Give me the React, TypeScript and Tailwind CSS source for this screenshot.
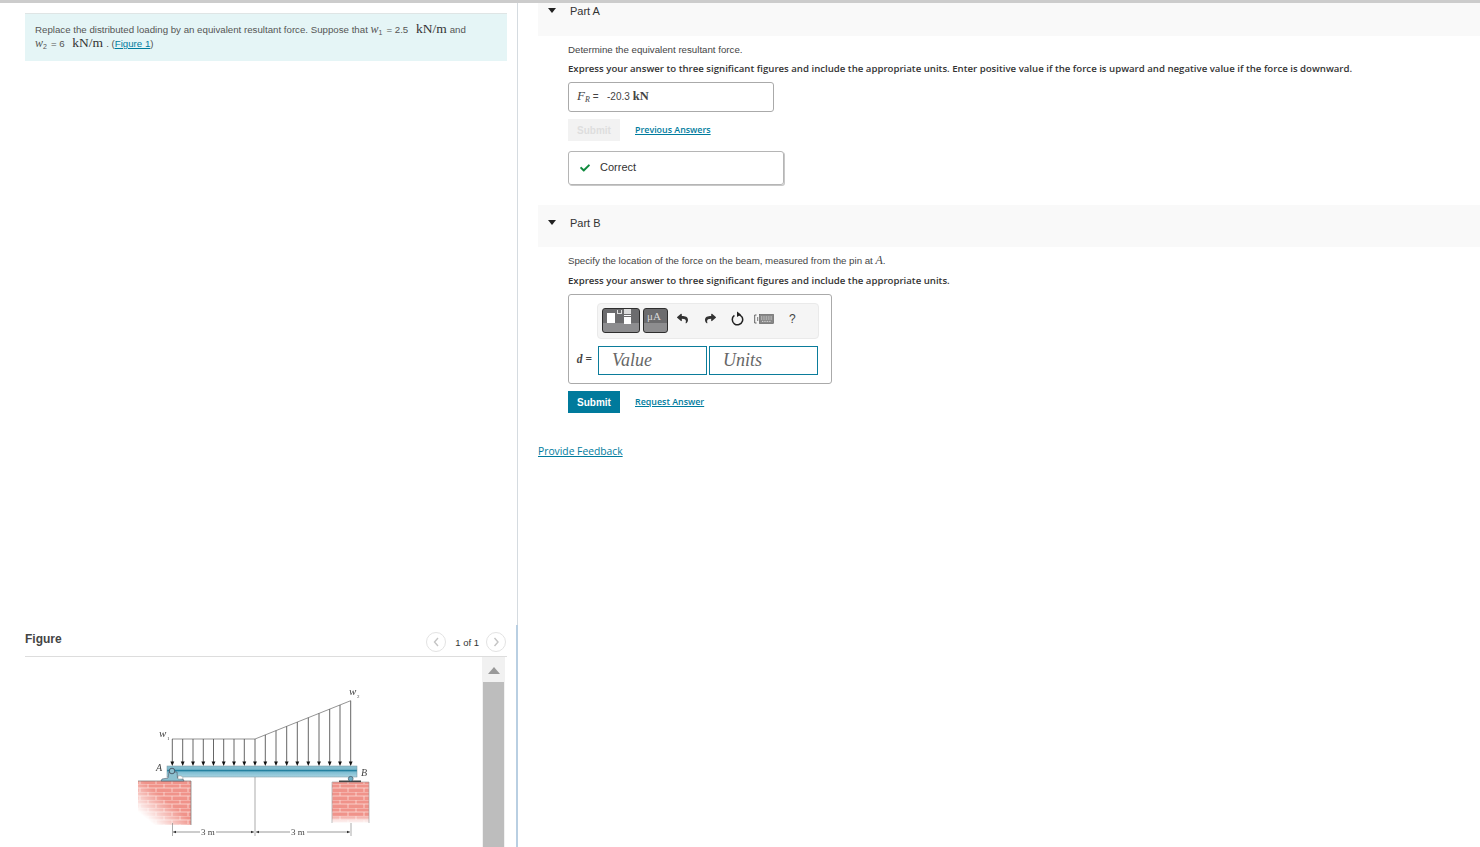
import { FaCheck, FaReply, FaShare } from "react-icons/fa";

const serif = "font-['Liberation_Serif',serif]";
const link = "text-[#007c9e] underline";

const Unit = ({ children }: { children: string }) => (
    <span className={`${serif} text-[13.5px] text-[#333] ml-[5px] mr-[3px]`}>{children}</span>
);

const W = ({ n }: { n: string }) => (
    <>
        <i className={`${serif} text-[12px]`}>w</i>
        <sub className="text-[7px] mr-[4px]">{n}</sub>
    </>
);

const Beam = () => {
    const flat = [172.3, 182.7, 193, 203.3, 213.5, 223.7, 234, 244.3, 255];
    const slope = [265.3, 276, 286.7, 297.3, 308.3, 319, 329.7, 340, 350.7];
    const top = (x: number) => 739 - ((x - 255) / 95.7) * 38.3;
    return (
        <svg className="blur-[0.3px]" width="457" height="190" viewBox="25 657 457 190">
            <defs>
                <pattern id="brick" width="16" height="8" patternUnits="userSpaceOnUse">
                    <rect width="16" height="8" fill="#f0938a" />
                    <path d="M0 0H16M0 4H16M4 0V4M12 4V8" stroke="#fbdcd7" strokeWidth="0.8" />
                </pattern>
                <linearGradient id="fadeL" x1="1" y1="0" x2="0" y2="1">
                    <stop offset="0.45" stopColor="#fff" stopOpacity="0" />
                    <stop offset="0.85" stopColor="#fff" stopOpacity="1" />
                </linearGradient>
                <linearGradient id="fadeB" x1="0" y1="0" x2="0" y2="1">
                    <stop offset="0.8" stopColor="#fff" stopOpacity="0" />
                    <stop offset="1" stopColor="#fff" stopOpacity="1" />
                </linearGradient>
                <linearGradient id="beam" x1="0" y1="0" x2="0" y2="1">
                    <stop offset="0" stopColor="#8cc2d2" />
                    <stop offset="0.3" stopColor="#7db8cb" />
                    <stop offset="0.4" stopColor="#1f7d9c" />
                    <stop offset="0.55" stopColor="#7dbdd2" />
                    <stop offset="1" stopColor="#a9d4e2" />
                </linearGradient>
            </defs>
            <rect x="138" y="781" width="53" height="44" fill="url(#brick)" />
            <rect x="138" y="781" width="53" height="44" fill="url(#fadeL)" />
            <path d="M138 781H191V825" fill="none" stroke="#777" strokeWidth="0.7" />
            <rect x="332" y="782" width="37" height="41" fill="url(#brick)" />
            <rect x="332" y="782" width="37" height="41" fill="url(#fadeB)" />
            <path d="M332 823V782H369V823" fill="none" stroke="#999" strokeWidth="0.6" />
            <path d="M172 739H255L350.7 700.7" fill="none" stroke="#666" strokeWidth="0.7" />
            {[...flat, ...slope].map((x) => {
                const y = x <= 255 ? 739 : top(x);
                return (
                    <g key={x}>
                        <line x1={x} y1={y} x2={x} y2={763} stroke="#555" strokeWidth="0.9" />
                        <path d={`M${x - 1.9} 761.5L${x + 1.9} 761.5L${x} 766Z`} fill="#111" />
                    </g>
                );
            })}
            <rect x="167" y="766" width="190" height="11" fill="url(#beam)" stroke="#74909b" strokeWidth="0.5" />
            <path d="M169 772H177L177.5 778L183 779L184 781H161L162 779L168 778Z" fill="#8cc0cf" stroke="#445" strokeWidth="0.5" />
            <circle cx="172" cy="771" r="2.8" fill="#8cc0cf" stroke="#334" strokeWidth="0.7" />
            <path d="M178 776Q183 775 183 779L178 779Z" fill="#fff" stroke="#777" strokeWidth="0.4" />
            <rect x="339" y="780.5" width="22" height="1.6" fill="#444" />
            <circle cx="350.7" cy="778.8" r="2.4" fill="#6fb0c6" stroke="#345" strokeWidth="0.6" />
            <line x1="255" y1="777" x2="255" y2="836" stroke="#888" strokeWidth="0.7" />
            <line x1="172.5" y1="823" x2="172.5" y2="836" stroke="#888" strokeWidth="0.7" />
            <line x1="351" y1="823" x2="351" y2="836" stroke="#888" strokeWidth="0.7" />
            <path d="M173 832H200M216 832H254M256 832H290M307 832H350" stroke="#555" strokeWidth="0.6" />
            <path d="M173 832L176 830.8V833.2ZM254 832L251 830.8V833.2ZM256 832L259 830.8V833.2ZM350 832L347 830.8V833.2Z" fill="#333" />
            <g fontFamily="'Liberation Serif',serif" fill="#444">
                <text x="201" y="835" fontSize="9">3 m</text>
                <text x="291" y="835" fontSize="9">3 m</text>
                <g fontStyle="italic" fontSize="10">
                    <text x="156" y="771">A</text>
                    <text x="361" y="776">B</text>
                    <text x="159" y="737" fontSize="11">w</text>
                    <text x="349" y="695" fontSize="11">w</text>
                </g>
                <text x="167" y="740" fontSize="5">1</text>
                <text x="357" y="698" fontSize="5">2</text>
            </g>
        </svg>
    );
};

const Chevron = ({ d }: { d: string }) => (
    <svg width="7" height="10" viewBox="0 0 7 10">
        <path d={d} fill="none" stroke="#c4c4c4" strokeWidth="1.4" />
    </svg>
);

const LeftPanel = () => (
    <div className="flex flex-col w-[518px] shrink-0 h-[844px] pl-[25px] pr-[10px] relative border-r border-[#d5dbe0]">
        <div className="mt-[10px] h-[48px] w-[482px] bg-[#e5f5f6] border-t border-[#dfe5e5] pt-[8px] pl-[10px] text-[9.7px] leading-[13px] text-[#555]">
            <p>
                Replace the distributed loading by an equivalent resultant force. Suppose that <W n="1" />= 2.5 <Unit>kN/m</Unit>and
            </p>
            <p>
                <W n="2" />= 6 <Unit>kN/m</Unit>. <span>(<a className={link}>Figure 1</a>)</span>
            </p>
        </div>
        <div className="mt-auto">
            <div className="flex items-center h-[34px] border-b border-[#dddddd] w-[482px]">
                <span className="text-[12px] font-bold text-[#444] flex-1 -translate-y-[1px]">Figure</span>
                <div className="flex items-center translate-y-[2px]">
                    <span className="w-[20px] h-[20px] rounded-full border border-[#e3e3e3] flex items-center justify-center">
                        <Chevron d="M5 1L1.5 5L5 9" />
                    </span>
                    <span className="mx-[8px] text-[9.5px] text-[#333] translate-x-[1px] translate-y-[2px]">1 of 1</span>
                    <span className="w-[20px] h-[20px] rounded-full border border-[#e3e3e3] flex items-center justify-center mr-[1px]">
                        <Chevron d="M1.5 1L5 5L1.5 9" />
                    </span>
                </div>
            </div>
            <div className="flex w-[457px] h-[190px] overflow-hidden">
                <Beam />
            </div>
        </div>
        <div className="absolute left-[482px] bottom-0 w-[23px] h-[190px] bg-[#f1f1f1] px-[1px]">
            <div className="mx-auto mt-[10px] w-0 h-0 border-x-[6px] border-x-transparent border-b-[7px] border-b-[#999]" />
            <div className="mt-[8px] h-[165px] bg-[#bdbdbd]" />
        </div>
        <div className="absolute right-[-1px] bottom-0 w-[2px] h-[222px] bg-[#b9cfe2]" />
    </div>
);

const PartHeader = ({ title, className }: { title: string; className: string }) => (
    <div className={`flex pl-[10px] bg-[#f9f9f9] ${className}`}>
        <span className="mr-[14px] mt-[3px] w-0 h-0 border-x-[4px] border-x-transparent border-t-[5px] border-t-[#222]" />
        <span className="text-[11px] leading-[13px] text-[#333]">{title}</span>
    </div>
);

const ToolBtn = ({ width, children }: { width: string; children: React.ReactNode }) => (
    <div
        className={`${width} h-[25px] rounded-[3px] border border-[#2e2e2e] relative overflow-hidden bg-[linear-gradient(#6c6c6e_0,#6c6c6e_60%,#8d8d8f_60%,#8d8d8f_100%)]`}
    >
        {children}
    </div>
);

const Toolbar = () => (
    <div className="flex items-start w-[222px] h-[36px] ml-[28px] bg-[#f5f5f5] border border-[#eaeaea] rounded-[4px] pl-[4px] pt-[4px]">
        <ToolBtn width="w-[38px]">
            <div className="absolute left-[4px] top-[4px] w-[8px] h-[10px] bg-white" />
            <div className="absolute left-[14px] top-[1px] w-[5px] h-[4px] border border-t-0 border-[#ddd]" />
            <div className="absolute left-[21px] top-[0px] w-[7px] h-[5px] bg-[#ddd]" />
            <div className="absolute left-[21px] top-[6px] w-[7px] h-[1px] bg-white" />
            <div className="absolute left-[21px] top-[8px] w-[7px] h-[7px] bg-white" />
        </ToolBtn>
        <div className="w-[3px]" />
        <ToolBtn width="w-[25px]">
            <span className={`${serif} absolute left-[3px] top-0 text-[11px] leading-[14px] text-[#d8d8d8]`}>μA</span>
        </ToolBtn>
        <FaReply className="ml-[9px] mt-[5px] text-[#333] w-[11px] h-[11px]" />
        <FaShare className="ml-[17px] mt-[5px] text-[#333] w-[11px] h-[11px]" />
        <svg className="ml-[15px] mt-[3px]" width="14" height="15" viewBox="0 0 14 15">
            <path d="M3.4 4.4A5.2 5.2 0 1 0 6.6 3.4" fill="none" stroke="#222" strokeWidth="1.5" />
            <path d="M6 0.5L10 3.4L6 6Z" fill="#222" />
        </svg>
        <svg className="ml-[9px] mt-[6px]" width="20" height="10" viewBox="0 0 20 10">
            <path d="M2.5 1H0.7V9H2.5" fill="none" stroke="#555" strokeWidth="0.9" />
            <rect x="3.2" y="3" width="1" height="4" fill="#777" />
            <rect x="5.5" y="0.5" width="14" height="9" fill="#888" stroke="#555" strokeWidth="0.6" />
            <path d="M7 3H18M7 5H18M8 7.4H17" stroke="#eee" strokeWidth="0.8" strokeDasharray="1 0.7" />
        </svg>
        <span className="ml-[15px] mt-[3px] text-[12px] leading-[16px] text-[#444]">?</span>
    </div>
);

const RightPanel = () => (
    <div className="flex-1 pl-[20px] text-[#333]">
        <PartHeader title="Part A" className="h-[33px] pt-[2px]" />
        <div className="pl-[30px]">
            <p className="mt-[8px] text-[9.7px] leading-[12px] text-[#444]">Determine the equivalent resultant force.</p>
            <p className="mt-[7px] text-[9.63px] leading-[12px] font-['Open_Sans',sans-serif] font-semibold text-[#333] whitespace-nowrap">
                Express your answer to three significant figures and include the appropriate units. Enter positive value if the force is upward and negative value if the force is downward.
            </p>
            <div className="mt-[7px] w-[206px] h-[30px] border border-[#aaaaaa] rounded-[3px] flex items-center pl-[8px] pb-[2px] text-[10px] text-[#444]">
                <i className={`${serif} text-[13px]`}>F</i>
                <sub className={`${serif} italic text-[8px] mt-[3px]`}>R</sub>
                <span className="ml-[3px]">= &nbsp;&nbsp;-20.3</span>
                <span className={`${serif} ml-[3px] text-[12.5px] font-semibold`}>kN</span>
            </div>
            <div className="flex items-center mt-[7px]">
                <button className="w-[52px] h-[22px] bg-[#f2f2f2] text-[10px] text-[#dedede] font-bold">Submit</button>
                <a className={`${link} ml-[15px] text-[8.9px] font-['Open_Sans',sans-serif] font-semibold`}>Previous Answers</a>
            </div>
            <div className="mt-[10px] w-[216px] h-[34px] border border-[#b5b5b5] rounded-[3px] shadow-[1px_1px_0_0_#c8c8c8] flex items-center pl-[10px] pb-[1px]">
                <FaCheck className="text-[#0f8a3e] w-[12px] h-[10px]" />
                <span className="ml-[9px] text-[11px] text-[#333]">Correct</span>
            </div>
        </div>
        <PartHeader title="Part B" className="mt-[20px] h-[42px] pt-[12px]" />
        <div className="pl-[30px]">
            <p className="mt-[7px] text-[9.7px] leading-[12px] text-[#444]">
                Specify the location of the force on the beam, measured from the pin at <i className={`${serif} text-[12px]`}>A</i>.
            </p>
            <p className="mt-[8px] text-[9.63px] leading-[12px] font-['Open_Sans',sans-serif] font-semibold text-[#333]">
                Express your answer to three significant figures and include the appropriate units.
            </p>
            <div className="mt-[7px] w-[264px] h-[90px] border border-[#aaaaaa] rounded-[3px] pt-[8px]">
                <Toolbar />
                <div className="flex items-center mt-[7px]">
                    <span className={`${serif} w-[29px] text-right text-[11.5px] font-semibold text-[#444] pr-[6px] whitespace-nowrap -translate-y-[1px]`}>
                        <i>d</i> =
                    </span>
                    <div className={`${serif} italic w-[109px] h-[29px] border border-[#0b7c9b] pl-[13px] text-[18px] leading-[26px] text-[#666]`}>Value</div>
                    <div className={`${serif} italic w-[109px] h-[29px] ml-[2px] border border-[#0b7c9b] pl-[13px] text-[18px] leading-[26px] text-[#666]`}>Units</div>
                </div>
            </div>
            <div className="flex items-center mt-[7px]">
                <button className="w-[52px] h-[22px] bg-[#007a9c] pt-[1px] text-[10px] text-white font-bold">Submit</button>
                <a className={`${link} ml-[15px] text-[8.9px] font-['Open_Sans',sans-serif] font-semibold`}>Request Answer</a>
            </div>
        </div>
        <a className={`${link} block mt-[31px] text-[10.3px] font-['Open_Sans',sans-serif]`}>Provide Feedback</a>
    </div>
);

export default function App() {
    return (
        <div className="w-[1480px] h-[847px] overflow-hidden bg-white font-['Liberation_Sans',sans-serif]">
            <div className="h-[3px] bg-[#cccccc]" />
            <div className="flex">
                <LeftPanel />
                <RightPanel />
            </div>
        </div>
    );
}
